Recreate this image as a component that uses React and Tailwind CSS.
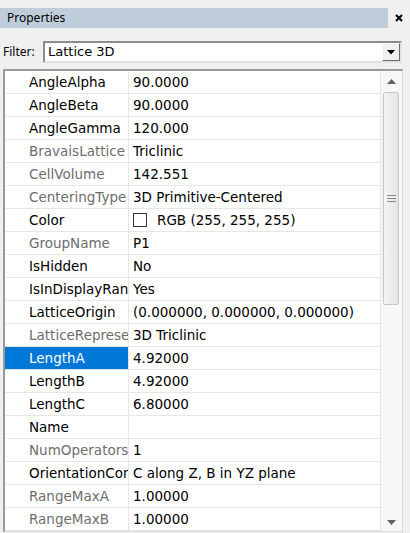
import React from 'react';

const rows = [
  { name: 'AngleAlpha', value: '90.0000' },
  { name: 'AngleBeta', value: '90.0000' },
  { name: 'AngleGamma', value: '120.000' },
  { name: 'BravaisLattice', value: 'Triclinic', ro: true },
  { name: 'CellVolume', value: '142.551', ro: true },
  { name: 'CenteringType', value: '3D Primitive-Centered', ro: true },
  { name: 'Color', value: 'RGB (255, 255, 255)', swatch: true },
  { name: 'GroupName', value: 'P1', ro: true },
  { name: 'IsHidden', value: 'No' },
  { name: 'IsInDisplayRange', value: 'Yes' },
  { name: 'LatticeOrigin', value: '(0.000000, 0.000000, 0.000000)' },
  { name: 'LatticeRepresentation', value: '3D Triclinic', ro: true },
  { name: 'LengthA', value: '4.92000', selected: true },
  { name: 'LengthB', value: '4.92000' },
  { name: 'LengthC', value: '6.80000' },
  { name: 'Name', value: '' },
  { name: 'NumOperators', value: '1', ro: true },
  { name: 'OrientationConvention', value: 'C along Z, B in YZ plane' },
  { name: 'RangeMaxA', value: '1.00000', ro: true },
  { name: 'RangeMaxB', value: '1.00000', ro: true },
];

function PropRow({ row }) {
  return (
    <div className="flex h-[23px] border-b border-[#e6e6e6] shrink-0">
      <div
        className={`w-[123px] shrink-0 pl-[24px] overflow-hidden whitespace-nowrap leading-[22px] ${
          row.selected ? 'bg-[#0078d7] text-white' : row.ro ? 'text-[#6d6d6d]' : 'text-black'
        }`}
      >
        {row.name}
      </div>
      <div className="flex-1 border-l border-[#e6e6e6] pl-[4px] flex items-center overflow-hidden whitespace-nowrap text-black leading-[22px]">
        {row.swatch && <span className="w-[14px] h-[14px] border border-[#333] bg-white mr-[10px] shrink-0" />}
        {row.value}
      </div>
    </div>
  );
}

export default function App() {
  return (
    <div className="w-[410px] h-[533px] bg-[#f0f0f0] overflow-hidden" style={{ fontFamily: '"DejaVu Sans", sans-serif' }}>
      {/* title bar */}
      <div className="flex mt-[8px] h-[20px]">
        <div className="flex-1 bg-[#bfcddb] flex items-center pl-[7px] text-[12px] text-black" style={{ fontFamily: '"Noto Sans", sans-serif' }}>
          Properties
        </div>
        <div className="w-[22px] flex items-center justify-center">
          <svg width="8" height="8" viewBox="0 0 8 8">
            <path d="M1 1 L7 7 M7 1 L1 7" stroke="#000" strokeWidth="2" />
          </svg>
        </div>
      </div>

      {/* filter */}
      <div className="flex items-center mt-[13px] h-[22px] pl-[3px]">
        <span className="w-[40px] text-[12px] text-black" style={{ fontFamily: '"Noto Sans", sans-serif' }}>Filter:</span>
        <div className="w-[359px] h-[22px] flex border-2 border-t-[#8c8c8c] border-l-[#8c8c8c] border-b-[#e3e3e3] border-r-[#e3e3e3] bg-white">
          <div className="flex-1 pl-[3px] text-[13px] leading-[18px] text-black">Lattice 3D</div>
          <div className="w-[18px] bg-[#f0f0f0] border border-t-white border-l-white border-b-[#696969] border-r-[#696969] flex items-center justify-center">
            <svg width="8" height="5" viewBox="0 0 8 5">
              <path d="M0 0 H8 L4 4.5 Z" fill="#000" />
            </svg>
          </div>
        </div>
      </div>

      {/* grid */}
      <div className="ml-[3px] mt-[6px] w-[400px] h-[463px] flex border-l-2 border-t-2 border-r border-b border-l-[#9a9a9a] border-t-[#9a9a9a] border-r-[#dcdcdc] border-b-[#dcdcdc] bg-white text-[13.5px]">
        <div className="w-[376px] flex flex-col border-r border-[#e6e6e6] overflow-hidden">
          {rows.map((r) => (
            <PropRow key={r.name} row={r} />
          ))}
        </div>
        <div className="flex-1 bg-[#f7f7f7] flex flex-col items-center">
          <div className="h-[21px] w-full flex items-center justify-center">
            <svg width="9" height="5" viewBox="0 0 9 5">
              <path d="M0 5 L4.5 0 L9 5 Z" fill="#606060" />
            </svg>
          </div>
          <div className="w-[16px] h-[213px] mr-[1px] rounded-[2px] border border-[#c6c6c6] bg-gradient-to-r from-[#f5f5f5] to-[#e4e4e4] flex flex-col items-center justify-center gap-[2px]">
            <span className="w-[9px] h-px bg-[#8a8a8a]" />
            <span className="w-[9px] h-px bg-[#8a8a8a]" />
            <span className="w-[9px] h-px bg-[#8a8a8a]" />
          </div>
          <div className="flex-1" />
          <div className="h-[18px] w-full flex items-center justify-center">
            <svg width="9" height="5" viewBox="0 0 9 5">
              <path d="M0 0 L9 0 L4.5 5 Z" fill="#606060" />
            </svg>
          </div>
        </div>
      </div>
    </div>
  );
}
